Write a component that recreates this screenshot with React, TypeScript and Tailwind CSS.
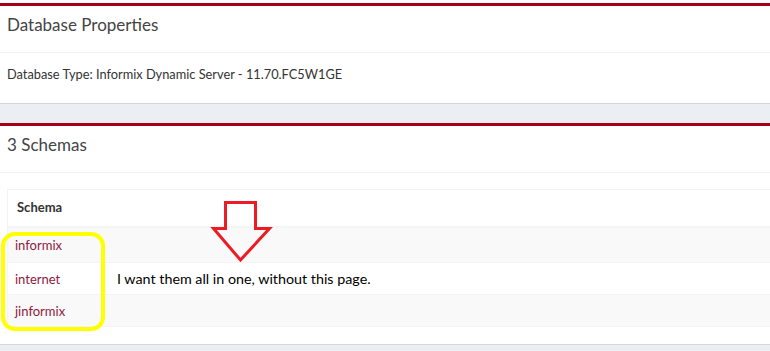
import React from "react";

const font = { fontFamily: "Lato, 'Open Sans', sans-serif" };

export default function App() {
  const rows = ["informix", "internet", "jinformix"];
  return (
    <div className="relative w-[770px] h-[351px] overflow-hidden bg-[#ebeef3] text-[#333]" style={font}>
      <div className="h-[3px] bg-white" />
      <div className="bg-white border-t-[3px] border-[#a4001e] border-b border-b-[#d2d6de]">
        <div className="h-[46px] flex items-center pb-[8px] px-[7px] text-[17px] text-[#444]">Database Properties</div>
        <div className="border-t border-[#f4f4f4] h-[51px] flex items-center pb-[6px] px-[7px] text-[12.8px]">
          Database Type: Informix Dynamic Server - 11.70.FC5W1GE
        </div>
      </div>
      <div className="h-[19px]" />
      <div className="bg-white border-t-[3px] border-[#a4001e] border-b border-b-[#d2d6de]">
        <div className="h-[46px] flex items-center pb-[8px] px-[7px] text-[17px] text-[#444]">3 Schemas</div>
        <div className="border-t border-[#f4f4f4] pt-[16px] pb-[17px] pl-[7px]">
          <div className="border border-[#f4f4f4] border-r-0 text-[13px]">
            <div className="h-[36px] flex items-center pl-[9px] font-bold">Schema</div>
            <div className="border-t-2 border-[#f4f4f4]">
              {rows.map((r, i) => (
                <div
                  key={r}
                  className={
                    (i % 2 === 0 ? "bg-[#f9f9f9] " : "bg-white ") +
                    (i === 0 ? "h-[34px] " : "h-[32px] border-t border-[#f4f4f4] ") +
                    "flex items-center pt-[2px] pl-[7px] text-[#8e1a3d]"
                  }
                >
                  {r}
                </div>
              ))}
            </div>
          </div>
        </div>
      </div>

      {/* annotations */}
      <div className="absolute left-[117px] top-[269px] text-[14.3px] text-black leading-[20px]">
        I want them all in one, without this page.
      </div>
      <div className="absolute left-[1px] top-[232px] w-[104px] h-[99px] rounded-[14px] border-[4px] border-[#ffff00]" />
      <svg className="absolute left-[210px] top-[199px]" width="64" height="66" viewBox="0 0 64 66">
        <path
          d="M15.5 3.5 H45.5 V29.5 H59.5 L30.5 61 L3.5 29.5 H15.5 Z"
          fill="none"
          stroke="#ed1c24"
          strokeWidth="3"
          strokeLinejoin="miter"
        />
      </svg>
    </div>
  );
}
